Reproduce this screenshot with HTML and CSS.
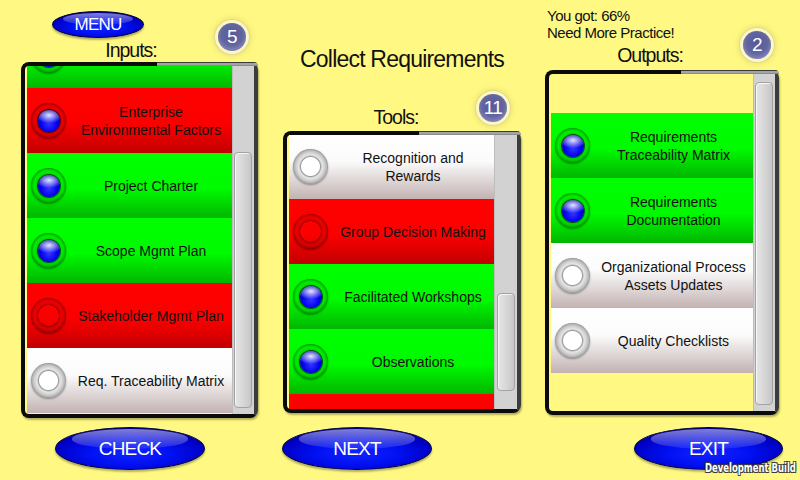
FILE: index.html
```html
<!DOCTYPE html>
<html>
<head>
<meta charset="utf-8">
<title>Collect Requirements</title>
<link rel="stylesheet" href="styles.css">
</head>
<body>
<div class="screen">
  <div class="columns">
    <section class="col col-left">
      <div class="pill pill-menu"><span class="pill-text">MENU</span></div>
      <h2 class="caption caption-inputs">Inputs:</h2>
      <span class="badge badge-inputs">5</span>
      <div class="frame frame-left">
        <div class="viewport">
          <ul class="list list-left">
            <li class="item green item-partial"><span class="radio-cell"><span class="radio"><span class="ball"></span></span></span><span class="label">Requirements Mgmt Plan</span></li>
            <li class="item red"><span class="radio-cell"><span class="radio"><span class="ball"></span></span></span><span class="label">Enterprise Environmental Factors</span></li>
            <li class="item green"><span class="radio-cell"><span class="radio"><span class="ball"></span></span></span><span class="label">Project Charter</span></li>
            <li class="item green"><span class="radio-cell"><span class="radio"><span class="ball"></span></span></span><span class="label">Scope Mgmt Plan</span></li>
            <li class="item red"><span class="radio-cell"><span class="radio"></span></span><span class="label">Stakeholder Mgmt Plan</span></li>
            <li class="item white"><span class="radio-cell"><span class="radio light"></span></span><span class="label">Req. Traceability Matrix</span></li>
          </ul>
        </div>
        <div class="track track-left"><span class="thumb"></span></div>
      </div>
    </section>

    <section class="col col-mid">
      <h1 class="title">Collect Requirements</h1>
      <h2 class="caption caption-tools">Tools:</h2>
      <span class="badge badge-tools">11</span>
      <div class="frame frame-mid">
        <div class="viewport">
          <ul class="list list-mid">
            <li class="item white"><span class="radio-cell"><span class="radio light"></span></span><span class="label">Recognition and Rewards</span></li>
            <li class="item red"><span class="radio-cell"><span class="radio"></span></span><span class="label">Group Decision Making</span></li>
            <li class="item green"><span class="radio-cell"><span class="radio"><span class="ball"></span></span></span><span class="label">Facilitated Workshops</span></li>
            <li class="item green"><span class="radio-cell"><span class="radio"><span class="ball"></span></span></span><span class="label">Observations</span></li>
            <li class="item red"><span class="radio-cell"><span class="radio"></span></span><span class="label"></span></li>
          </ul>
        </div>
        <div class="track track-mid"><span class="thumb"></span></div>
      </div>
    </section>

    <section class="col col-right">
      <p class="status">You got: 66%<br>Need More Practice!</p>
      <h2 class="caption caption-outputs">Outputs:</h2>
      <span class="badge badge-outputs">2</span>
      <div class="frame frame-right">
        <div class="viewport">
          <ul class="list list-right">
            <li class="item green"><span class="radio-cell"><span class="radio"><span class="ball"></span></span></span><span class="label">Requirements Traceability Matrix</span></li>
            <li class="item green"><span class="radio-cell"><span class="radio"><span class="ball"></span></span></span><span class="label">Requirements Documentation</span></li>
            <li class="item white"><span class="radio-cell"><span class="radio light"></span></span><span class="label">Organizational Process Assets Updates</span></li>
            <li class="item white"><span class="radio-cell"><span class="radio light"></span></span><span class="label">Quality Checklists</span></li>
          </ul>
        </div>
        <div class="track track-right"><span class="thumb"></span></div>
      </div>
    </section>
  </div>

  <div class="footer">
    <div class="pill pill-check"><span class="pill-text">CHECK</span></div>
    <div class="pill pill-next"><span class="pill-text">NEXT</span></div>
    <div class="pill pill-exit"><span class="pill-text">EXIT</span></div>
  </div>

  <span class="devbuild">Development Build</span>
</div>
</body>
</html>
```

FILE: styles.css
```css
html, body {
  margin: 0;
  padding: 0;
}

body {
  background: #fff983;
  font-family: "Liberation Sans", Arial, sans-serif;
  color: #111;
}

.screen {
  position: relative;
  width: 800px;
  height: 480px;
  overflow: hidden;
}

.columns {
  display: flex;
  align-items: flex-start;
  height: 427px;
  padding-left: 20px;
}

.col {
  position: relative;
  display: flex;
  flex-direction: column;
}

.col-left { width: 238px; }
.col-mid { width: 238px; margin-left: 25px; }
.col-right { width: 234px; margin-left: 24px; }

/* headings */
.caption {
  margin: 0;
  font-weight: normal;
  font-size: 19.5px;
  line-height: 22px;
  letter-spacing: -1px;
  text-align: center;
  color: #111;
}

.caption-inputs { margin: 1px 16px 0 0; }
.caption-tools { margin: 34px 12px 0 0; }
.caption-outputs { margin: 3px 24px 0 0; }

.title {
  margin: 46px 0 0;
  font-weight: normal;
  font-size: 23px;
  line-height: 26px;
  letter-spacing: -0.8px;
  text-align: center;
  color: #111;
}

.status {
  margin: 7px 0 0 2px;
  font-size: 15px;
  line-height: 17px;
  letter-spacing: -0.5px;
  color: #111;
}

/* count badges */
.badge {
  position: absolute;
  width: 28px;
  height: 28px;
  border-radius: 50%;
  display: flex;
  align-items: center;
  justify-content: center;
  color: #fff;
  font-size: 19px;
  letter-spacing: -0.5px;
  background: radial-gradient(circle at 50% 42%, #56599a 0%, #63659f 50%, #8d90c8 85%, #a3a5d6 100%);
  box-shadow: 0 0 0 3px #fbf7c6, 0 0 0 4px #e4da88, 0 0 4px 6px rgba(225, 215, 110, 0.5);
}

.badge-inputs { left: 198px; top: 23px; }
.badge-tools { left: 196px; top: 94px; }
.badge-outputs { left: 198px; top: 31px; }

/* glossy blue buttons */
.pill {
  position: relative;
  box-sizing: border-box;
  display: flex;
  align-items: center;
  justify-content: center;
  border-radius: 50%;
  border: 1px solid #000038;
  background: radial-gradient(ellipse 72% 70% at 50% 62%, #1222ff 0%, #0010f2 40%, #0000c4 72%, #000070 100%);
  box-shadow: 0 2px 2px rgba(0, 0, 0, 0.3);
  color: #fff;
  font-size: 19px;
  letter-spacing: -0.8px;
}

.pill::before {
  content: "";
  position: absolute;
  left: 11%;
  right: 11%;
  top: 3%;
  height: 48%;
  border-radius: 50%;
  background: linear-gradient(rgba(255, 255, 255, 0.5), rgba(255, 255, 255, 0.08));
}

.pill-text {
  position: relative;
}

.pill-menu {
  width: 92px;
  height: 27px;
  margin: 11px 0 0 32px;
  font-size: 17px;
}

.footer {
  display: flex;
  align-items: flex-start;
  height: 53px;
}

.pill-check { width: 150px; height: 43px; margin-left: 55px; }
.pill-next { width: 150px; height: 43px; margin-left: 77px; }
.pill-exit { width: 149px; height: 43px; margin-left: 202px; }

/* list frames */
.frame {
  position: relative;
  box-sizing: border-box;
  display: flex;
  border: 4px solid #0b0b0b;
  border-right-color: #3c3c3c;
  border-radius: 8px;
  padding-left: 2px;
  background: #fff983;
  box-shadow: 1px 2px 2px rgba(0, 0, 0, 0.3);
}

.frame::before {
  content: "";
  position: absolute;
  top: -4px;
  left: 132px;
  right: -4px;
  height: 4px;
  border-top-right-radius: 8px;
  background: linear-gradient(#3a3a3a 0 1px, #a4a4a4 1px 3px, #8c8c8c 3px);
}

.frame-left { width: 237px; height: 356px; margin: 1px 0 0 1px; }
.frame-mid { width: 238px; height: 282px; margin-top: 3px; }
.frame-right { width: 234px; height: 345px; margin-top: 4px; }

.viewport {
  flex: 1;
  overflow: hidden;
}

.list {
  list-style: none;
  margin: 0;
  padding: 0;
}

.list-left { margin-top: -43px; }
.list-mid { margin-top: -1px; }
.list-right { padding-top: 39px; }

.item {
  display: flex;
  align-items: center;
  height: 65px;
}

.green { background: linear-gradient(#00ff00 0%, #00fa00 55%, #00b600 100%); }
.red { background: linear-gradient(#ff0000 0%, #fb0000 55%, #c20000 100%); }
.white { background: linear-gradient(#ffffff 0%, #fbfbfb 42%, #c3b2b2 100%); }

.radio-cell {
  width: 43px;
  display: flex;
  justify-content: center;
}

.label {
  flex: 1;
  padding: 0 5px;
  text-align: center;
  font-size: 14px;
  line-height: 18px;
  color: #111;
}

.item-partial .label { padding-bottom: 7px; }

/* radio buttons */
.radio {
  width: 35px;
  height: 35px;
  border-radius: 50%;
  display: flex;
  align-items: center;
  justify-content: center;
  background: radial-gradient(circle, rgba(0, 0, 0, 0) 0 10px, rgba(0, 0, 0, 0.32) 10.5px, rgba(0, 0, 0, 0.1) 12.5px, rgba(0, 0, 0, 0.06) 14.5px, rgba(0, 0, 0, 0.28) 16.8px, rgba(0, 0, 0, 0.4) 17.5px);
  box-shadow: 0 1px 2px rgba(0, 0, 0, 0.35);
}

.radio.light {
  background: radial-gradient(circle, #ffffff 0 9px, #9c9c9c 10px, #e6e6e6 11.5px, #d2d2d2 14px, #b4b4b4 16.3px, #8e8e8e 17.5px);
}

.ball {
  width: 22px;
  height: 22px;
  border-radius: 50%;
  background:
    radial-gradient(ellipse 62% 36% at 50% 24%, rgba(255, 255, 255, 0.9), rgba(255, 255, 255, 0) 100%),
    radial-gradient(circle at 50% 62%, #3434ff 0%, #0000ee 48%, #00009a 80%, #000050 100%);
  box-shadow: 0 0 0 1px rgba(0, 0, 40, 0.6);
}

/* scrollbars */
.track {
  display: flex;
  flex-direction: column;
  align-items: center;
  background: #d2d2d2;
  box-shadow: inset 1px 0 0 #bdbdbd;
}

.track-left { width: 22px; }
.track-mid { width: 23px; }
.track-right { width: 22px; }

.thumb {
  box-sizing: border-box;
  width: 18px;
  border: 1px solid #a2a2a2;
  border-radius: 4px;
  background: linear-gradient(to right, #e6e6e6, #d4d4d4 60%, #c6c6c6);
  box-shadow: inset 1px 1px 0 #f6f6f6;
}

.track-left .thumb { margin-top: 86px; height: 256px; }
.track-mid .thumb { margin-top: 158px; height: 98px; }
.track-right .thumb { margin-top: 8px; height: 323px; }

/* watermark */
.devbuild {
  position: absolute;
  right: 4px;
  bottom: 5px;
  font-family: "DejaVu Sans Condensed", "DejaVu Sans", sans-serif;
  font-weight: bold;
  font-size: 11.5px;
  line-height: 14px;
  color: #fff;
  transform: scaleX(0.82);
  transform-origin: right center;
  text-shadow: 1px 1px 0 #3a3a3a, -1px -1px 0 #3a3a3a, 1px -1px 0 #3a3a3a, -1px 1px 0 #3a3a3a;
}
```
